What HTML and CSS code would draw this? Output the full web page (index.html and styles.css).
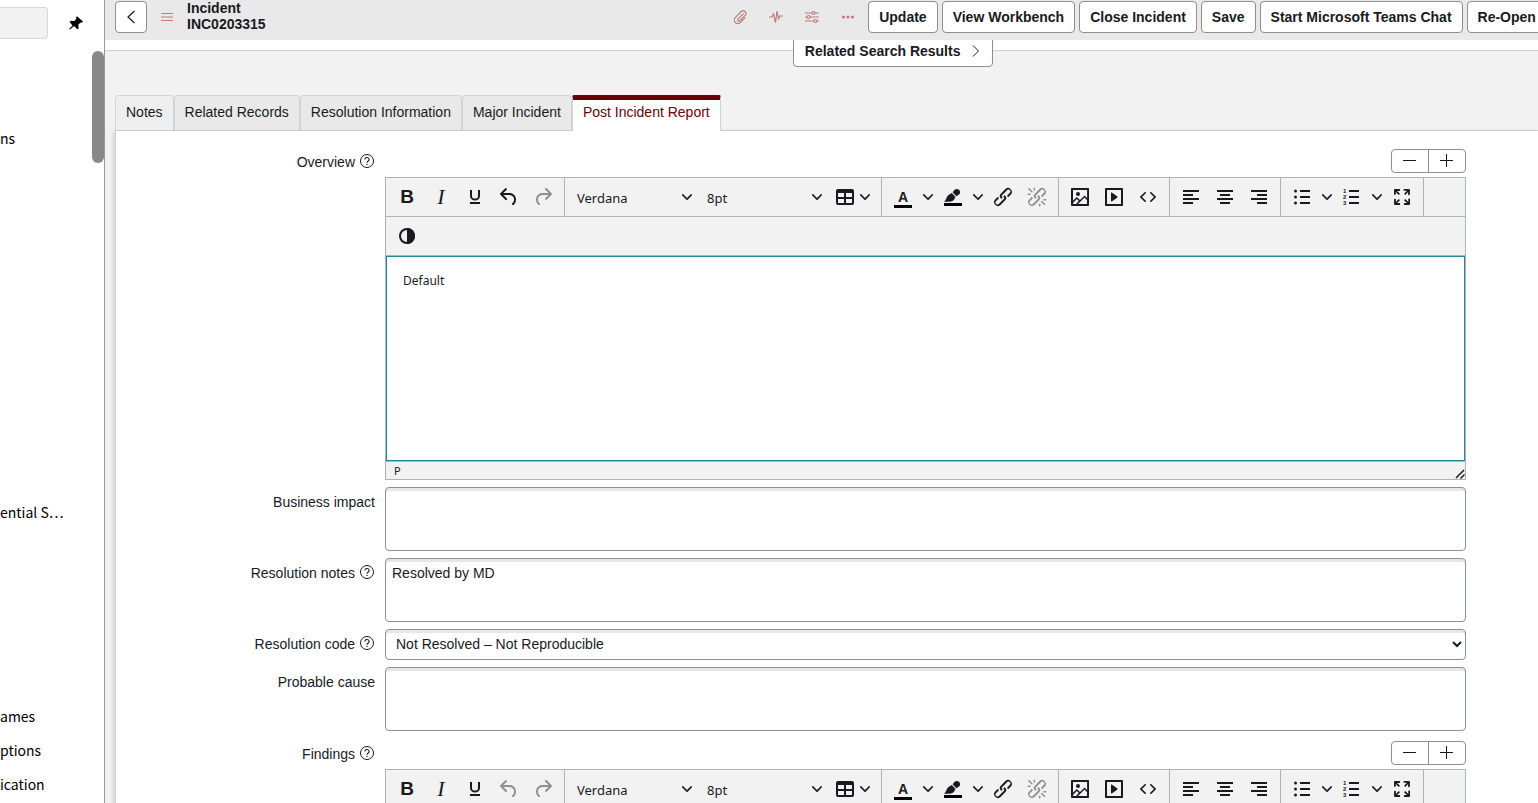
FILE: index.html
```html
<!DOCTYPE html>
<html lang="en">

<head>
    <meta charset="utf-8">
    <title>Incident INC0203315</title>
    <link rel="stylesheet" href="styles.css">
</head>

<body>

    <!-- icon sprite -->
    <svg class="sprite" aria-hidden="true">
        <symbol id="i-chevron" viewBox="0 0 10 10"><path d="M8.7 2.2c.3-.3.8-.3 1 0 .4.4.4.9 0 1.2L5.7 7.8c-.3.3-.9.3-1.2 0L.2 3.4a.8.8 0 0 1 0-1.2c.3-.3.8-.3 1.1 0L5 6l3.7-3.8Z"/></symbol>
        <symbol id="i-underline" viewBox="0 0 24 24"><path d="M8 5v6a4 3.6 0 0 0 8 0V5" fill="none" stroke="currentColor" stroke-width="2"/><path d="M7 17h10v2H7z"/></symbol>
        <symbol id="i-undo" viewBox="0 0 24 24"><path d="M6.4 8H12c3.7 0 6.2 2 6.8 5.1.6 2.7-.4 5.6-2.3 6.8a1 1 0 0 1-1-1.8c1.1-.6 1.8-2.7 1.4-4.6-.5-2.1-2.1-3.5-4.9-3.5H6.4l3.3 3.3a1 1 0 1 1-1.4 1.4l-5-5a1 1 0 0 1 0-1.4l5-5a1 1 0 0 1 1.4 1.4L6.4 8Z"/></symbol>
        <symbol id="i-redo" viewBox="0 0 24 24"><path d="M17.6 10H12c-2.8 0-4.4 1.4-4.9 3.5-.4 2 .3 4 1.4 4.6a1 1 0 1 1-1 1.8c-2-1.2-2.9-4.1-2.3-6.8.6-3 3-5.1 6.8-5.1h5.6l-3.3-3.3a1 1 0 1 1 1.4-1.4l5 5a1 1 0 0 1 0 1.4l-5 5a1 1 0 0 1-1.4-1.4l3.3-3.3Z"/></symbol>
        <symbol id="i-table" viewBox="0 0 24 24"><path fill-rule="evenodd" d="M19 4a2 2 0 0 1 2 2v12a2 2 0 0 1-2 2H5a2 2 0 0 1-2-2V6c0-1.1.9-2 2-2h14ZM5 14v4h6v-4H5Zm14 0h-6v4h6v-4Zm0-6h-6v4h6V8ZM5 12h6V8H5v4Z"/></symbol>
        <symbol id="i-highlight" viewBox="0 0 24 24"><path d="M3 18h18v3H3z" fill="#000"/><path d="M3 16.700C5.500 15 5 12.500 7 10.500 8.500 9 10 8.800 10.800 8l3.700 4c-.6.700-.5 1.800-2 3.300-1.600 1.500-5 1.800-9.500 1.400Z"/><path d="M11.600 7.200 13.500 5a3.200 3.200 0 1 1 4.300 4.700l-2.500 1.500z"/></symbol>
        <symbol id="i-link" viewBox="0 0 24 24"><path d="M6.2 12.3a1 1 0 0 1 1.4 1.4l-2 2a2 2 0 1 0 2.6 2.8l4.8-4.8a1 1 0 0 0 0-1.4 1 1 0 1 1 1.4-1.3 2.9 2.9 0 0 1 0 4L9.6 20a3.9 3.9 0 0 1-5.5-5.5l2-2Zm11.6-.6a1 1 0 0 1-1.4-1.4l2-2a2 2 0 1 0-2.6-2.8L11 10.3a1 1 0 0 0 0 1.4A1 1 0 1 1 9.6 13a2.9 2.9 0 0 1 0-4L14.4 4a3.9 3.9 0 0 1 5.5 5.5l-2 2Z"/></symbol>
        <symbol id="i-unlink" viewBox="0 0 24 24"><path d="M6.2 12.3a1 1 0 0 1 1.4 1.4l-2 2a2 2 0 1 0 2.6 2.8l4.8-4.8a1 1 0 0 0 0-1.4 1 1 0 1 1 1.4-1.3 2.9 2.9 0 0 1 0 4L9.6 20a3.9 3.9 0 0 1-5.5-5.5l2-2Zm11.6-.6a1 1 0 0 1-1.4-1.4l2-2a2 2 0 1 0-2.6-2.8L11 10.3a1 1 0 0 0 0 1.4A1 1 0 1 1 9.6 13a2.9 2.9 0 0 1 0-4L14.4 4a3.9 3.9 0 0 1 5.5 5.5l-2 2ZM7.6 6.3a.8.8 0 0 1-1 1.1L3.3 4.2a.7.7 0 1 1 1-1l3.2 3.1ZM5.1 8.6a.8.8 0 0 1 0 1.5H3a.8.8 0 0 1 0-1.5H5Zm5-3.5a.8.8 0 0 1-1.5 0V3a.8.8 0 0 1 1.5 0V5Zm6 11.8a.8.8 0 0 1 1-1l3.2 3.2a.8.8 0 0 1-1 1L16 17Zm-2.2 2a.8.8 0 0 1 1.5 0V21a.8.8 0 0 1-1.5 0V19Zm5-3.5a.7.7 0 1 1 0-1.5H21a.8.8 0 0 1 0 1.5H19Z"/></symbol>
        <symbol id="i-image" viewBox="0 0 24 24"><path fill-rule="evenodd" d="m5 15.7 3.3-3.2c.3-.3.7-.3 1 0L12 15l4.1-4c.3-.4.8-.4 1 0l2 1.9V5H5v10.7ZM5 18V19h3l2.8-2.9-2-2L5 17.9Zm14-3-2.5-2.4-6.4 6.5H19v-4ZM4 3h16c.6 0 1 .4 1 1v16c0 .6-.4 1-1 1H4a1 1 0 0 1-1-1V4c0-.6.4-1 1-1Zm6 8a2 2 0 1 0 0-4 2 2 0 0 0 0 4Z"/></symbol>
        <symbol id="i-media" viewBox="0 0 24 24"><path fill-rule="evenodd" d="M4 3h16c.6 0 1 .4 1 1v16c0 .6-.4 1-1 1H4a1 1 0 0 1-1-1V4c0-.6.4-1 1-1Zm1 2v14h14V5H5Zm4.8 2.6 5.6 4a.5.5 0 0 1 0 .8l-5.6 4A.5.5 0 0 1 9 16V8a.5.5 0 0 1 .8-.4Z"/></symbol>
        <symbol id="i-code" viewBox="0 0 24 24"><path d="M9.8 15.7c.3.3.3.8 0 1-.3.4-.9.4-1.2 0l-4.4-4.1a.8.8 0 0 1 0-1.2l4.4-4.2c.3-.3.9-.3 1.2 0 .3.3.3.8 0 1.1L6 12l3.8 3.7ZM14.2 15.7c-.3.3-.3.8 0 1 .4.4.9.4 1.2 0l4.4-4.1c.3-.3.3-.9 0-1.2l-4.4-4.2a.8.8 0 0 0-1.2 0c-.3.3-.3.8 0 1.1L18 12l-3.8 3.7Z"/></symbol>
        <symbol id="i-left" viewBox="0 0 24 24"><path d="M4 5h16v2H4zM4 9h10v2H4zM4 13h16v2H4zM4 17h10v2H4z"/></symbol>
        <symbol id="i-center" viewBox="0 0 24 24"><path d="M4 5h16v2H4zM7 9h10v2H7zM4 13h16v2H4zM7 17h10v2H7z"/></symbol>
        <symbol id="i-right" viewBox="0 0 24 24"><path d="M4 5h16v2H4zM10 9h10v2H10zM4 13h16v2H4zM10 17h10v2H10z"/></symbol>
        <symbol id="i-bullets" viewBox="0 0 24 24"><path d="M10 5h10v2H10zM10 11h10v2H10zM10 17h10v2H10z"/><circle cx="5.5" cy="6" r="1.5"/><circle cx="5.5" cy="12" r="1.5"/><circle cx="5.5" cy="18" r="1.5"/></symbol>
        <symbol id="i-fullscreen" viewBox="0 0 24 24"><path d="m15.3 10-1.2-1.3 2.9-3h-2.3a.9.9 0 1 1 0-1.7H19c.5 0 .9.4.9.9v4.4a.9.9 0 1 1-1.8 0V7l-2.9 3Zm0 4 3 3v-2.3a.9.9 0 1 1 1.7 0V19c0 .5-.4.9-.9.9h-4.4a.9.9 0 1 1 0-1.8H17l-3-2.9 1.3-1.2ZM10 15.3 7 18.1h2.3a.9.9 0 0 1 0 1.8H5a.9.9 0 0 1-.9-.9v-4.4a.9.9 0 1 1 1.8 0V17l2.9-3 1.2 1.3ZM8.7 10l-3-3v2.3a.9.9 0 0 1-1.7 0V5c0-.5.4-.9.9-.9h4.4a.9.9 0 0 1 0 1.8H7l3 2.9-1.3 1.2Z"/></symbol>
        <symbol id="i-contrast" viewBox="0 0 24 24"><circle cx="12" cy="12" r="7" fill="none" stroke="currentColor" stroke-width="2"/><path d="M12 4a8 8 0 0 1 0 16z"/></symbol>
        <symbol id="i-help" viewBox="0 0 14 14"><g fill="none" stroke="currentColor"><circle cx="7" cy="7" r="6.5"/><path d="M4.9 5.6a2.1 2 0 1 1 3.1 1.7q-1 .6-1 1.5" stroke-width="1.1"/></g><circle cx="7" cy="10.4" r=".7"/></symbol>
    </svg>

    <div class="layout">
        <aside class="sidebar">
            <div class="sidebar-head">
                <input class="filter" type="text" aria-label="Filter">
                <button class="pin" aria-label="Pin menu">
                    <svg width="16" height="16" viewBox="0 0 16 16"><path d="M8.9 1.2 15 6.6l-1.5 1.2-1-.3-2.2 2.2.4 3.5-1.4 1.1-3.3-3.2L2 14.6l-.9-.5 3.4-3.7-3-3.3 1.2-1.3 3.7.2 2-2.3-.4-1.3z" fill="#000"/></svg>
                </button>
            </div>
            <div class="sidebar-body">
                <ul class="menu">
                    <li><a href="#">ns</a></li>
                    <li></li>
                    <li></li>
                    <li></li>
                    <li></li>
                    <li></li>
                    <li></li>
                    <li></li>
                    <li></li>
                    <li></li>
                    <li></li>
                    <li><a href="#">ential S…</a></li>
                    <li></li>
                    <li></li>
                    <li></li>
                    <li></li>
                    <li></li>
                    <li><a href="#">ames</a></li>
                    <li><a href="#">ptions</a></li>
                    <li><a href="#">ication</a></li>
                </ul>
                <div class="scroll-thumb"></div>
            </div>
        </aside>

        <main class="content">
            <header class="record-head">
                <div class="record-title">
                    <button class="btn back" aria-label="Back">
                        <svg width="10" height="14" viewBox="0 0 10 14"><path d="M8.500 1 2 7l6.500 6" fill="none" stroke="currentColor" stroke-width="1.200"/></svg>
                    </button>
                    <button class="icon-btn" aria-label="Menu">
                        <svg width="12" height="8" viewBox="0 0 12 8"><path d="M0 .5h12M0 4h12M0 7.500h12" stroke="currentColor"/></svg>
                    </button>
                    <h1>Incident<br>INC0203315</h1>
                </div>
                <div class="record-actions">
                    <button class="icon-btn" aria-label="Attachments">
                        <svg width="16" height="16" viewBox="0 0 16 16"><path d="M11.500 4.500 6 10.200a1.200 1.200 0 0 0 1.800 1.700l5.300-5.600a2.600 2.600 0 0 0-3.900-3.800L3.300 8.600a3.500 3.500 0 0 0 5 5l4.900-5.100" fill="none" stroke="currentColor" stroke-width="1.200"/></svg>
                    </button>
                    <button class="icon-btn" aria-label="Activity">
                        <svg width="14" height="14" viewBox="0 0 14 14"><path d="M0 7h3l1.500-3L6.500 12.500 8 1l1.500 8 1.500-3h3" fill="none" stroke="currentColor" stroke-width="1.200"/></svg>
                    </button>
                    <button class="icon-btn" aria-label="Personalize">
                        <svg width="16" height="14" viewBox="0 0 16 14"><g fill="none" stroke="currentColor" stroke-width="1.200"><path d="M1 3h7M11 3h4M1 7h2M6 7h9M1 11h9M13 11h2"/><circle cx="9.500" cy="3" r="1.500"/><circle cx="4.500" cy="7" r="1.500"/><circle cx="11.500" cy="11" r="1.500"/></g></svg>
                    </button>
                    <button class="icon-btn" aria-label="More options">
                        <svg width="14" height="4" viewBox="0 0 14 4"><circle cx="2.500" cy="2" r="1.600"/><circle cx="7" cy="2" r="1.600"/><circle cx="11.500" cy="2" r="1.600"/></svg>
                    </button>
                    <button class="btn">Update</button>
                    <button class="btn">View Workbench</button>
                    <button class="btn">Close Incident</button>
                    <button class="btn">Save</button>
                    <button class="btn">Start Microsoft Teams Chat</button>
                    <button class="btn">Re-Open Incident</button>
                </div>
            </header>

            <div class="related">
                <button class="btn related-btn">Related Search Results
                    <svg width="8" height="12" viewBox="0 0 8 12"><path d="m1 .5 5.500 5.500L1 11.500" fill="none" stroke="currentColor"/></svg>
                </button>
            </div>

            <div class="tabs" role="tablist">
                <button class="tab" role="tab">Notes</button>
                <button class="tab" role="tab">Related Records</button>
                <button class="tab" role="tab">Resolution Information</button>
                <button class="tab" role="tab">Major Incident</button>
                <button class="tab active" role="tab" aria-selected="true">Post Incident Report</button>
            </div>

            <form class="panel">
                <div class="field rich">
                    <label for="overview">Overview <svg class="help"><use href="#i-help"/></svg></label>
                    <div>
                        <div class="resizer">
                            <button type="button" aria-label="Shrink"><svg width="14" height="14"><path d="M0 6.500h13" stroke="currentColor"/></svg></button>
                            <button type="button" aria-label="Expand"><svg width="14" height="14"><path d="M0 6.500h13M6.500 0v13" stroke="currentColor"/></svg></button>
                        </div>
                        <div class="editor">
                            <div class="toolbar">
                                <div class="group">
                                    <button type="button" class="bold" aria-label="Bold">B</button>
                                    <button type="button" class="italic" aria-label="Italic">I</button>
                                    <button type="button" aria-label="Underline"><svg><use href="#i-underline"/></svg></button>
                                    <button type="button" class="undo" aria-label="Undo"><svg><use href="#i-undo"/></svg></button>
                                    <button type="button" aria-label="Redo" disabled><svg><use href="#i-redo"/></svg></button>
                                </div>
                                <div class="group">
                                    <span class="picker">
                                        <select aria-label="Font"><option>Verdana</option></select>
                                        <svg class="chevron"><use href="#i-chevron"/></svg>
                                    </span>
                                    <span class="picker">
                                        <select aria-label="Font size"><option>8pt</option></select>
                                        <svg class="chevron"><use href="#i-chevron"/></svg>
                                    </span>
                                    <button type="button" class="menu-btn" aria-label="Table"><svg><use href="#i-table"/></svg><svg class="chevron"><use href="#i-chevron"/></svg></button>
                                </div>
                                <div class="group">
                                    <button type="button" aria-label="Text color"><span class="color">A</span></button>
                                    <button type="button" class="split" aria-label="Text colors"><svg class="chevron"><use href="#i-chevron"/></svg></button>
                                    <button type="button" aria-label="Highlight"><svg><use href="#i-highlight"/></svg></button>
                                    <button type="button" class="split" aria-label="Highlight colors"><svg class="chevron"><use href="#i-chevron"/></svg></button>
                                    <button type="button" aria-label="Insert link"><svg><use href="#i-link"/></svg></button>
                                    <button type="button" aria-label="Remove link" disabled><svg><use href="#i-unlink"/></svg></button>
                                </div>
                                <div class="group">
                                    <button type="button" aria-label="Image"><svg><use href="#i-image"/></svg></button>
                                    <button type="button" aria-label="Media"><svg><use href="#i-media"/></svg></button>
                                    <button type="button" aria-label="Source code"><svg><use href="#i-code"/></svg></button>
                                </div>
                                <div class="group">
                                    <button type="button" aria-label="Align left"><svg><use href="#i-left"/></svg></button>
                                    <button type="button" aria-label="Align center"><svg><use href="#i-center"/></svg></button>
                                    <button type="button" aria-label="Align right"><svg><use href="#i-right"/></svg></button>
                                </div>
                                <div class="group">
                                    <button type="button" aria-label="Bullet list"><svg><use href="#i-bullets"/></svg></button>
                                    <button type="button" class="split" aria-label="Bullet styles"><svg class="chevron"><use href="#i-chevron"/></svg></button>
                                    <button type="button" aria-label="Numbered list"><svg viewBox="0 0 24 24"><path d="M9 5h10v2H9zM9 11h10v2H9zM9 17h10v2H9z"/><g class="digits"><text x="3" y="8">1</text><text x="3" y="14">2</text><text x="3" y="20">3</text></g></svg></button>
                                    <button type="button" class="split" aria-label="Number styles"><svg class="chevron"><use href="#i-chevron"/></svg></button>
                                    <button type="button" aria-label="Fullscreen"><svg><use href="#i-fullscreen"/></svg></button>
                                </div>
                            </div>
                            <div class="toolbar">
                                <div class="group last">
                                    <button type="button" aria-label="Contrast"><svg><use href="#i-contrast"/></svg></button>
                                </div>
                            </div>
                            <textarea class="editor-body" id="overview">Default</textarea>
                            <div class="statusbar">
                                <span>P</span>
                                <svg width="10" height="10" viewBox="0 0 10 10"><path d="M1 9 9 1M5.500 9.500l4-4" stroke="currentColor" stroke-width="1.500"/></svg>
                            </div>
                        </div>
                    </div>
                </div>

                <div class="field">
                    <label for="impact">Business impact</label>
                    <textarea class="control" id="impact"></textarea>
                </div>
                <div class="field">
                    <label for="notes">Resolution notes <svg class="help"><use href="#i-help"/></svg></label>
                    <textarea class="control" id="notes">Resolved by MD</textarea>
                </div>
                <div class="field">
                    <label for="code">Resolution code <svg class="help"><use href="#i-help"/></svg></label>
                    <select class="control" id="code">
                        <option>Not Resolved – Not Reproducible</option>
                    </select>
                </div>
                <div class="field">
                    <label for="cause">Probable cause</label>
                    <textarea class="control" id="cause"></textarea>
                </div>

                <div class="field rich">
                    <label for="findings">Findings <svg class="help"><use href="#i-help"/></svg></label>
                    <div id="findings-slot"></div>
                </div>
            </form>
        </main>
    </div>

    <script>
        // the second editor has the same controls as the first one
        const slot = document.querySelector('#findings-slot');
        for (let part of document.querySelectorAll('.resizer, .editor')) {
            slot.append(part.cloneNode(true));
        }
        const body = slot.querySelector('.editor-body');
        body.id = 'findings';
        body.value = '';

        // nothing to undo yet
        slot.querySelector('.undo').disabled = true;
    </script>

</body>

</html>
```

FILE: styles.css
```css
* {
    box-sizing: border-box;
}

body {
    margin: 0;
    font: 14px/20px "Liberation Sans", Arial, sans-serif;
    color: #181a1f;
    background: #f2f2f2;
}

button,
input,
select,
textarea {
    font: inherit;
    color: inherit;
    margin: 0;
}

button {
    padding: 0;
    border: 0;
    background: none;
    cursor: pointer;
}

svg {
    display: block;
    flex: none;
    fill: currentColor;
}

.sprite {
    position: absolute;
    width: 0;
    height: 0;
}

.layout {
    display: flex;
    height: 100vh;
    overflow: hidden;
}

/* sidebar */

.sidebar {
    flex: none;
    width: 105px;
    background: #fff;
    border-right: 1px solid #999;
    overflow: hidden;
    font: 14px/34px "Noto Sans CJK SC", sans-serif;
    color: #000;
}

.sidebar-head {
    display: flex;
    align-items: center;
    gap: 20px;
    padding-top: 7px;
    margin-bottom: 12px;
}

.filter {
    width: 48px;
    height: 32px;
    border: 1px solid #d8d8d8;
    border-left: 0;
    border-radius: 0 4px 4px 0;
    background: #f2f2f2;
}

.sidebar-body {
    display: flex;
    justify-content: space-between;
}

.menu {
    list-style: none;
    margin: 0;
    padding: 70px 0 0;
}

.menu li {
    height: 34px;
    white-space: nowrap;
}

.menu a {
    color: inherit;
    text-decoration: none;
}

.scroll-thumb {
    width: 12px;
    height: 112px;
    border-radius: 6px;
    background: #888;
}

/* record header */

.content {
    flex: 1;
    min-width: 0;
}

.record-head {
    position: relative;
    z-index: 1;
    display: flex;
    height: 40px;
    padding-top: 1px;
    background: #e9e9e9;
    overflow: hidden;
}

.record-title {
    flex: none;
    display: flex;
    width: 43%;
    padding-left: 10px;
}

.record-title h1 {
    margin: -1px 0 0;
    font-size: 14px;
    line-height: 16px;
}

.record-actions {
    display: flex;
    gap: 4px;
}

.btn {
    flex: none;
    height: 32px;
    padding: 0 10px;
    border: 1px solid #8f8f8f;
    border-radius: 4px;
    background: #fff;
    font-weight: bold;
    white-space: nowrap;
}

.back {
    display: flex;
    align-items: center;
    width: 32px;
}

.icon-btn {
    display: flex;
    align-items: center;
    justify-content: center;
    width: 40px;
    height: 32px;
    color: #bd7c7b;
}

.record-actions .icon-btn {
    width: 32px;
}

.record-actions .icon-btn:first-child {
    margin-left: 3px;
}

.related {
    position: relative;
    height: 11px;
    background: #fff;
    border-bottom: 1px solid #cfd1da;
}

.related-btn {
    position: absolute;
    left: 48%;
    top: -5px;
    display: flex;
    align-items: center;
    gap: 12px;
    padding: 0 12px 0 11px;
}

/* tabs */

.tabs {
    display: flex;
    margin: 44px 0 0 10px;
    border-bottom: 1px solid #d0d4da;
}

.tab {
    height: 35px;
    padding: 0 10px 2px;
    border: 1px solid #d0d4da;
    border-bottom: 0;
    border-radius: 4px 4px 0 0;
    background: #e9e9e9;
    white-space: nowrap;
}

.tab:first-child {
    background: #eee;
}

.tab.active {
    height: 36px;
    margin-bottom: -1px;
    padding-bottom: 7px;
    border-top: 5px solid #6b0006;
    border-radius: 2px 2px 0 0;
    background: #fff;
    color: #6b0006;
}

/* form */

.panel {
    display: flex;
    flex-direction: column;
    gap: 7px;
    margin-left: 10px;
    padding: 15px 72px 15px 0;
    border-left: 1px solid #d0d4da;
    background: #fff;
    box-shadow: -2px 0 4px rgba(0, 0, 0, .12);
}

.field {
    display: grid;
    grid-template-columns: 259px minmax(0, 1fr);
    gap: 10px;
    align-items: start;
}

.field label {
    display: flex;
    align-items: center;
    justify-content: flex-end;
    gap: 5px;
    padding-top: 5px;
}

.field.rich {
    padding-top: 3px;
}

.field.rich label {
    padding-top: 3px;
}

.help {
    width: 14px;
    height: 14px;
    margin: 0 1px 2px 0;
}

.control {
    display: block;
    width: 100%;
    height: 64px;
    padding: 4px 6px;
    border: 1px solid #8c8f9c;
    border-radius: 4px;
    background: #fff;
    box-shadow: inset 0 3px #e7e7e7;
    resize: none;
}

select.control {
    height: 31px;
    padding: 0 0 1px 6px;
}

.resizer {
    display: flex;
    width: 75px;
    height: 24px;
    margin: 0 0 4px auto;
    border: 1px solid #8f8f8f;
    border-radius: 4px;
}

.resizer button {
    flex: 1;
    display: flex;
    align-items: center;
    justify-content: center;
}

.resizer button + button {
    border-left: 1px solid #8f8f8f;
}

/* rich text editor */

.editor {
    border: 1px solid #aeb2bd;
    background: #f2f2f2;
    font-family: "Noto Sans", sans-serif;
}

.toolbar {
    display: flex;
    height: 39px;
    border-bottom: 1px solid #aeb2bd;
}

.group {
    display: flex;
    align-items: center;
    padding: 0 4px;
    border-right: 1px solid #aeb2bd;
}

.group.last {
    border-right: 0;
}

.group button {
    display: flex;
    align-items: center;
    justify-content: center;
    width: 34px;
    height: 34px;
}

.group button:disabled {
    color: #8e9093;
}

.group svg {
    width: 24px;
    height: 24px;
}

.group .chevron {
    width: 10px;
    height: 10px;
}

.group .split {
    width: 16px;
}

.group .menu-btn {
    width: 48px;
    gap: 3px;
    padding-right: 3px;
}

.picker {
    position: relative;
}

.picker select {
    display: block;
    width: 130px;
    height: 34px;
    padding: 2px 8px 0;
    border: 0;
    background: none;
    appearance: none;
    font-size: 13px;
}

.picker .chevron {
    position: absolute;
    right: 7px;
    top: 12px;
    pointer-events: none;
}

.bold {
    font: 700 19px/24px "Liberation Sans", Arial, sans-serif;
}

.italic {
    font: italic 22px/24px "Liberation Serif", serif;
}

.color {
    width: 18px;
    margin-top: 4px;
    border-bottom: 3px solid #000;
    font: 700 14px/15px "Liberation Sans", Arial, sans-serif;
}

.digits {
    font: 700 6px "Liberation Sans", sans-serif;
}

.editor-body {
    display: block;
    width: 100%;
    height: 205px;
    padding: 14px 16px;
    border: 1px solid #1f8a9b;
    outline: 0;
    background: #fff;
    font-size: 12px;
    resize: none;
}

.statusbar {
    display: flex;
    align-items: flex-end;
    justify-content: space-between;
    height: 18px;
    padding-left: 8px;
    border-top: 1px solid #aeb2bd;
    font-size: 11px;
    line-height: 17px;
}
```
